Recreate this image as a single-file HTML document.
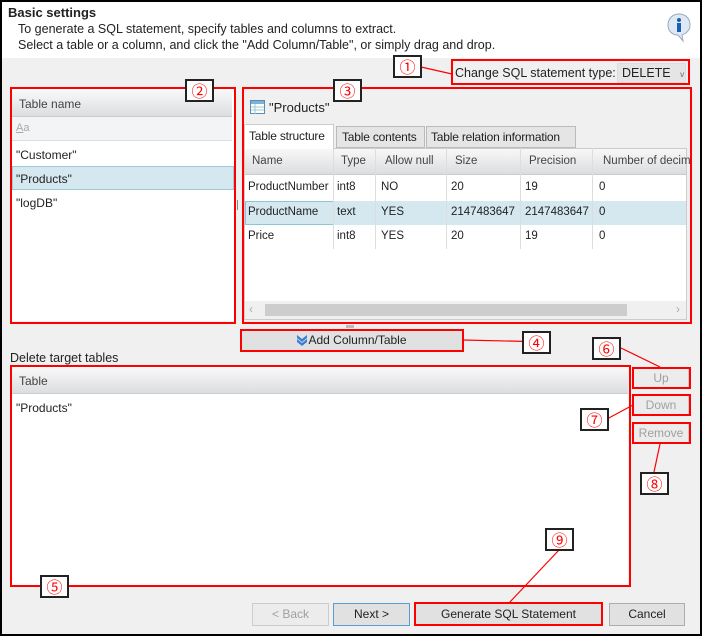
<!DOCTYPE html>
<html><head><meta charset="utf-8"><style>
*{box-sizing:border-box;margin:0;padding:0}
body{width:702px;height:636px;position:relative;overflow:hidden;background:#f0f0f0;font-family:"Liberation Sans","Noto Sans CJK JP",sans-serif;font-size:12px;color:#222}
.a{position:absolute;white-space:nowrap}
.frame{position:absolute;left:0;top:0;width:702px;height:636px;border:2px solid #000;z-index:50;pointer-events:none}
.red{position:absolute;border:2px solid #f00;z-index:20}
.call{position:absolute;width:29px;height:23px;background:#fff;border:2px solid #222;color:#f00;font-size:16px;text-align:center;line-height:19px;z-index:30;font-family:"Noto Sans CJK JP",sans-serif}
.hdr{background:linear-gradient(#f8f8f8,#dcdde0);color:#444;border-bottom:1px solid #ccc}
.btn{position:absolute;background:#e1e1e1;border:1px solid #adadad;text-align:center;line-height:20px;font-size:12px;white-space:nowrap}
.dis{color:#a0a0a0;background:#ececec;border-color:#ccc}
svg.l{position:absolute;left:0;top:0;z-index:25}
.tab{font-size:12px;letter-spacing:-0.2px}
</style></head><body>
<div class="a" style="left:0;top:0;width:702px;height:58px;background:#fff"></div>
<div class="a" style="left:8px;top:5px;font-weight:bold;font-size:13px">Basic settings</div>
<div class="a" style="left:18px;top:22px;font-size:12.5px">To generate a SQL statement, specify tables and columns to extract.</div>
<div class="a" style="left:18px;top:38px;font-size:12.5px">Select a table or a column, and click the "Add Column/Table", or simply drag and drop.</div>
<svg class="a" style="left:666px;top:13px" width="26" height="30" viewBox="0 0 26 30"><path d="M13 1C6 1 2 6 2 12c0 6 4 10 10 10l5 6-1-6c5-2 8-5 8-10C24 6 20 1 13 1z" fill="#dfe8f5" stroke="#9aa8bd"/><circle cx="13" cy="7" r="2" fill="#1a5fb4"/><rect x="11" y="10" width="4" height="9" fill="#1a5fb4"/></svg>

<div class="a" style="left:455px;top:66px;font-size:12.5px">Change SQL statement type:</div>
<div class="a" style="left:617px;top:63px;width:69px;height:20px;background:#e5e5e5;border:1px solid #ddd;padding-left:4px;line-height:18px;font-size:12.5px">DELETE <span style="font-size:8px;color:#666;margin-left:6px">v</span></div>
<div class="red" style="left:451px;top:59px;width:239px;height:26px"></div>

<!-- left panel -->
<div class="a" style="left:12px;top:89px;width:222px;height:232px;background:#fff"></div>
<div class="a hdr" style="left:12px;top:91px;width:220px;height:26px;padding:6px 7px">Table name</div>
<div class="a" style="left:12px;top:117px;width:220px;height:24px;background:#f3f4f6;border-bottom:1px solid #ddd;color:#aaa;padding:5px 4px;font-size:11px"><u>A</u>a</div>
<div class="a" style="left:16px;top:148px">"Customer"</div>
<div class="a" style="left:12px;top:166px;width:222px;height:24px;background:#d5e8f0;border:1px solid #9ccbdc"></div>
<div class="a" style="left:16px;top:172px">"Products"</div>
<div class="a" style="left:16px;top:196px">"logDB"</div>
<div class="red" style="left:10px;top:87px;width:226px;height:237px"></div>
<div class="a" style="left:237px;top:200px;width:1px;height:10px;background:#888"></div>

<!-- right panel -->
<svg class="a" style="left:250px;top:100px" width="15" height="14"><rect x="0.5" y="0.5" width="14" height="13" fill="#fff" stroke="#5a8db5"/><rect x="1" y="1" width="13" height="3" fill="#7fb0d6"/><path d="M1 7h13M1 10h13M5 4v10" stroke="#9cc" /></svg>
<div class="a" style="left:269px;top:100px;font-size:13px">"Products"</div>
<div class="a tab" style="left:244px;top:124px;width:90px;height:25px;background:#fff;border:1px solid #ccc;border-bottom:none;padding:4px 4px;z-index:2">Table structure</div>
<div class="a tab" style="left:336px;top:126px;width:89px;height:22px;background:#e5e5e5;border:1px solid #bbb;padding:3px 5px">Table contents</div>
<div class="a tab" style="left:426px;top:126px;width:150px;height:22px;background:#e5e5e5;border:1px solid #bbb;padding:3px 4px">Table relation information</div>
<div class="a" style="left:244px;top:148px;width:443px;height:172px;background:#fff;border:1px solid #ccc;overflow:hidden">
 <div class="a hdr" style="left:0;top:0;width:441px;height:26px"></div>
 <div class="a" style="left:0;top:52px;width:441px;height:24px;background:#d5e8f0"></div>
 <div class="a" style="left:0;top:52px;width:89px;height:24px;border:1px solid #8cc5d8"></div>
 <div class="a" style="left:0;top:152px;width:441px;height:18px;background:#f0f0f0"></div>
 <div class="a" style="left:20px;top:155px;width:362px;height:12px;background:#cdcdcd"></div>
 <div class="a" style="left:4px;top:153px;color:#aaa">&lsaquo;</div>
 <div class="a" style="left:431px;top:153px;color:#aaa">&rsaquo;</div>
</div>
<div class="a" style="left:244px;top:148px;font-size:11.5px">
 <div class="a" style="left:8px;top:7px;color:#444">Name</div><div class="a" style="left:97px;top:7px;color:#444">Type</div><div class="a" style="left:141px;top:7px;color:#444">Allow null</div><div class="a" style="left:211px;top:7px;color:#444">Size</div><div class="a" style="left:285px;top:7px;color:#444">Precision</div><div class="a" style="left:359px;top:7px;color:#444">Number of decim</div>
 <div class="a" style="left:4px;top:33px">ProductNumber</div><div class="a" style="left:93px;top:33px">int8</div><div class="a" style="left:137px;top:33px">NO</div><div class="a" style="left:207px;top:33px">20</div><div class="a" style="left:281px;top:33px">19</div><div class="a" style="left:355px;top:33px">0</div>
 <div class="a" style="left:4px;top:58px">ProductName</div><div class="a" style="left:93px;top:58px">text</div><div class="a" style="left:137px;top:58px">YES</div><div class="a" style="left:207px;top:58px">2147483647</div><div class="a" style="left:281px;top:58px">2147483647</div><div class="a" style="left:355px;top:58px">0</div>
 <div class="a" style="left:4px;top:82px">Price</div><div class="a" style="left:93px;top:82px">int8</div><div class="a" style="left:137px;top:82px">YES</div><div class="a" style="left:207px;top:82px">20</div><div class="a" style="left:281px;top:82px">19</div><div class="a" style="left:355px;top:82px">0</div>
 <div class="a" style="left:89px;top:0;width:1px;height:101px;background:#ddd"></div><div class="a" style="left:131px;top:0;width:1px;height:101px;background:#ddd"></div><div class="a" style="left:202px;top:0;width:1px;height:101px;background:#ddd"></div><div class="a" style="left:276px;top:0;width:1px;height:101px;background:#ddd"></div><div class="a" style="left:348px;top:0;width:1px;height:101px;background:#ddd"></div>
</div>
<div class="red" style="left:242px;top:87px;width:450px;height:237px"></div>

<div class="a" style="left:346px;top:325px;width:8px;height:3px;background:#bbb"></div>
<div class="btn" style="left:240px;top:329px;width:223px;height:22px;line-height:20px">
<svg width="12" height="12" style="vertical-align:-2px"><path d="M1 1l5 4 5-4v3l-5 4-5-4zM1 5l5 4 5-4v3l-5 4-5-4z" fill="#3a7fd0"/></svg>Add Column/Table</div>
<div class="red" style="left:240px;top:329px;width:224px;height:23px"></div>

<div class="a" style="left:10px;top:351px;font-size:12.5px">Delete target tables</div>
<div class="a" style="left:12px;top:367px;width:616px;height:218px;background:#fff"></div>
<div class="a hdr" style="left:12px;top:368px;width:616px;height:26px;padding:6px 7px">Table</div>
<div class="a" style="left:16px;top:401px">"Products"</div>
<div class="red" style="left:10px;top:365px;width:621px;height:222px"></div>

<div class="btn dis" style="left:633px;top:368px;width:56px;height:20px;line-height:18px">Up</div>
<div class="red" style="left:632px;top:367px;width:59px;height:22px"></div>
<div class="btn dis" style="left:633px;top:395px;width:56px;height:20px;line-height:18px">Down</div>
<div class="red" style="left:632px;top:394px;width:59px;height:22px"></div>
<div class="btn dis" style="left:633px;top:423px;width:56px;height:20px;line-height:18px">Remove</div>
<div class="red" style="left:632px;top:422px;width:59px;height:22px"></div>

<div class="btn dis" style="left:252px;top:603px;width:77px;height:23px">&lt; Back</div>
<div class="btn" style="left:333px;top:603px;width:77px;height:23px;border-color:#5b9bd5">Next &gt;</div>
<div class="btn" style="left:414px;top:603px;width:189px;height:23px">Generate SQL Statement</div>
<div class="red" style="left:414px;top:602px;width:189px;height:24px"></div>
<div class="btn" style="left:609px;top:603px;width:76px;height:23px">Cancel</div>

<svg class="l" width="702" height="636"><g stroke="#f00" stroke-width="1.2" fill="none">
<path d="M421 67L452 74"/><path d="M551 342L463 340"/><path d="M621 348L660 367"/><path d="M607 419L633 405"/><path d="M654 472L660 444"/><path d="M559 550L509 603"/></g></svg>
<div class="call" style="left:393px;top:55px">①</div>
<div class="call" style="left:185px;top:79px">②</div>
<div class="call" style="left:333px;top:79px">③</div>
<div class="call" style="left:522px;top:331px">④</div>
<div class="call" style="left:40px;top:575px">⑤</div>
<div class="call" style="left:592px;top:337px">⑥</div>
<div class="call" style="left:580px;top:408px">⑦</div>
<div class="call" style="left:640px;top:472px">⑧</div>
<div class="call" style="left:545px;top:528px">⑨</div>
<div class="frame"></div>
</body></html>
